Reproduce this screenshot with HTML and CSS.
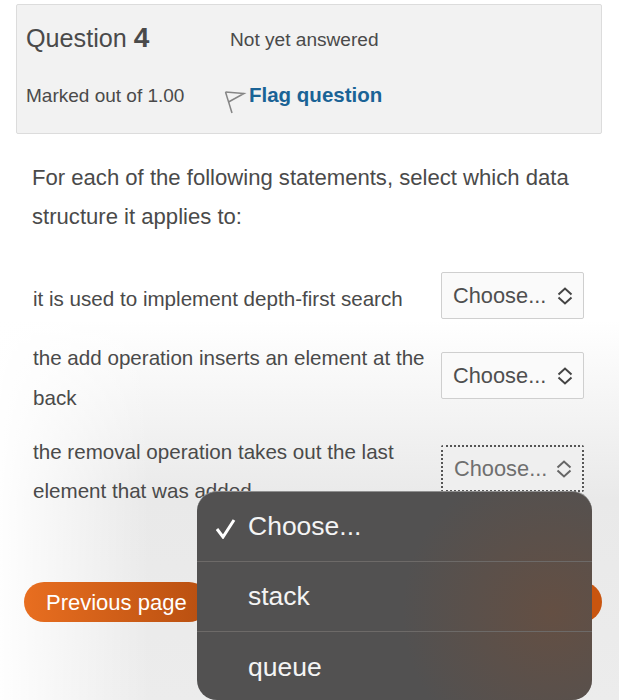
FILE: index.html
```html
<!DOCTYPE html>
<html lang="en">
<head>
    <meta charset="UTF-8">
    <meta name="viewport" content="width=device-width, initial-scale=1.0">
    <title>Question 4</title>
    <link rel="stylesheet" href="styles.css">
</head>
<body>
    <div class="page">
        <div class="question-info">
            <h3 class="question-no">Question <span class="question-num">4</span></h3>
            <div class="question-state">Not yet answered</div>
            <div class="question-grade">Marked out of 1.00</div>
            <div class="question-flag">
                <svg class="flag-icon" width="24" height="36" viewBox="0 0 24 36" fill="none" stroke="#858585" stroke-width="1.5">
                    <path d="M1.5 14L8 35"/>
                    <path d="M1.5 14L20 15.5L4.5 24"/>
                </svg>
                <a class="flag-link" href="#">Flag question</a>
            </div>
        </div>

        <p class="question-text">For each of the following statements, select which data structure it applies to:</p>

        <div class="match-row match-row-first">
            <div class="match-text">it is used to implement depth-first search</div>
            <div class="select-box">
                Choose...
                <svg class="select-arrows" width="18" height="18" viewBox="0 0 18 18" fill="none" stroke="#444" stroke-width="2">
                    <path d="M2.5 7.5L9 1.5L15.5 7.5"/>
                    <path d="M2.5 10.5L9 16.5L15.5 10.5"/>
                </svg>
            </div>
        </div>
        <div class="match-row match-row-second">
            <div class="match-text">the add operation inserts an element at the back</div>
            <div class="select-box">
                Choose...
                <svg class="select-arrows" width="18" height="18" viewBox="0 0 18 18" fill="none" stroke="#444" stroke-width="2">
                    <path d="M2.5 7.5L9 1.5L15.5 7.5"/>
                    <path d="M2.5 10.5L9 16.5L15.5 10.5"/>
                </svg>
            </div>
        </div>
        <div class="match-row match-row-third">
            <div class="match-text">the removal operation takes out the last element that was added</div>
            <div class="select-box select-focus">
                Choose...
                <svg class="select-arrows" width="18" height="18" viewBox="0 0 18 18" fill="none" stroke="#666" stroke-width="2">
                    <path d="M2.5 7.5L9 1.5L15.5 7.5"/>
                    <path d="M2.5 10.5L9 16.5L15.5 10.5"/>
                </svg>
            </div>
        </div>

        <div class="page-nav">
            <a class="page-button" href="#">Previous page</a>
            <a class="page-button" href="#">Next page</a>
        </div>

        <div class="picker">
            <div class="picker-item">
                <svg class="picker-check" width="22" height="22" viewBox="0 0 22 22" fill="none" stroke="#fff" stroke-width="3">
                    <path d="M2 12L8 20L19 3"/>
                </svg>
                Choose...
            </div>
            <div class="picker-item">stack</div>
            <div class="picker-item">queue</div>
        </div>
    </div>
</body>
</html>
```

FILE: styles.css
```css
* {
    box-sizing: border-box;
}

body {
    margin: 0;
    font-family: "Liberation Sans", Arial, sans-serif;
    color: #4a4a4a;
}

.page {
    position: relative;
    height: 700px;
    overflow: hidden;
    padding-top: 4px;
    background:
        linear-gradient(to right, rgba(255, 255, 255, 0.95), rgba(255, 255, 255, 0) 150px),
        linear-gradient(to bottom, #fff 320px, #e9e9e9 500px, #ececec 700px);
}

.question-info {
    display: grid;
    grid-template-columns: 204px 1fr;
    grid-template-rows: 58px 58px;
    width: 586px;
    height: 130px;
    margin-left: 16px;
    padding: 4px 0 0 9px;
    background-color: #f2f2f2;
    border: 1px solid #dcdcdc;
    border-radius: 2px;
    align-items: center;
}

.question-no {
    margin: 0;
    font-size: 25.2px;
    font-weight: normal;
    line-height: 40px;
}

.question-num {
    font-size: 28px;
    font-weight: bold;
}

.question-state {
    font-size: 19.1px;
    padding-top: 4px;
}

.question-grade {
    font-size: 19px;
}

.question-flag {
    display: flex;
    align-items: flex-start;
    margin-left: -6px;
    gap: 1px;
}

.flag-link {
    margin-top: 5px;
    font-size: 20.5px;
    font-weight: bold;
    line-height: 24px;
    color: #1a6396;
    text-decoration: none;
}

.question-text {
    margin: 24px 40px 0 32px;
    font-size: 22.1px;
    line-height: 39px;
}

.match-row {
    display: flex;
    justify-content: space-between;
    align-items: flex-start;
    width: 551px;
    margin-left: 33px;
    font-size: 20.6px;
    line-height: 39px;
}

.match-row-first {
    margin-top: 36px;
    height: 80px;
}

.match-row-second {
    height: 93px;
    line-height: 40px;
}

.match-text {
    width: 396px;
}

.match-row-first .match-text {
    padding-top: 7px;
}

.match-row-second .match-text {
    margin-top: -14px;
}

.match-row-third .match-text {
    margin-top: -13px;
}

.select-box {
    display: flex;
    align-items: center;
    justify-content: space-between;
    width: 143px;
    height: 47px;
    padding: 0 9px 0 11px;
    font-size: 21.8px;
    color: #4f4f4f;
    background-color: #fafafa;
    border: 1px solid #cfcfcf;
    border-radius: 2px;
}

.select-focus {
    color: #6f6f6f;
    background-color: #efefef;
    border: 2px dotted #555;
}

.page-nav {
    display: flex;
    justify-content: space-between;
    width: 578px;
    margin: 72px 0 0 24px;
}

.page-button {
    height: 40px;
    padding: 0 22px;
    font-size: 22px;
    line-height: 41px;
    color: #fff;
    text-decoration: none;
    background: linear-gradient(to right, #e86e20, #b84f10);
    border-radius: 20px;
}

.page-button:last-child {
    background: #c9550f;
}

.picker {
    position: absolute;
    left: 197px;
    top: 491px;
    width: 395px;
    height: 209px;
    color: #f4f4f4;
    background:
        radial-gradient(circle at 355px 120px, #644f43, rgba(100, 79, 67, 0) 150px),
        #525151;
    border-top: 1px solid #8f8f8f;
    border-radius: 20px;
    overflow: hidden;
}

.picker-item {
    position: relative;
    display: flex;
    align-items: center;
    height: 70px;
    padding-left: 51px;
    font-size: 26.5px;
    border-bottom: 1px solid #6d6a68;
}

.picker-item:last-child {
    border-bottom: none;
}

.picker-check {
    position: absolute;
    left: 18px;
    top: 25px;
}
```
